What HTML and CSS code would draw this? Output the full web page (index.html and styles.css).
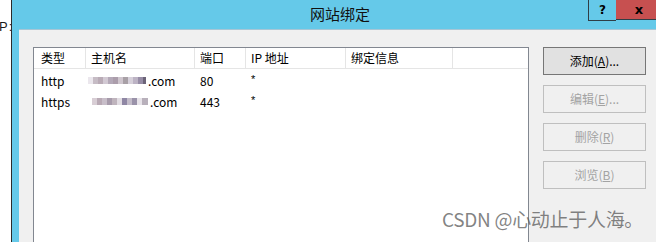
FILE: index.html
```html
<!DOCTYPE html>
<html lang="zh-CN">
<head>
<meta charset="utf-8">
<title>网站绑定</title>
<link rel="stylesheet" href="styles.css">
</head>
<body>
<div class="edge"><span class="edge-text">P<span class="colon">:</span></span></div>
<div class="window">
  <div class="titlebar">
    <div class="title">网站绑定</div>
    <div class="controls">
      <div class="ctl help">?</div>
      <div class="ctl close">x</div>
    </div>
  </div>
  <div class="client">
    <div class="list">
      <div class="grid header">
        <div class="hcell first">类型</div>
        <div class="hcell">主机名</div>
        <div class="hcell">端口</div>
        <div class="hcell">IP 地址</div>
        <div class="hcell">绑定信息</div>
      </div>
      <div class="grid row">
        <div class="cell first">http</div>
        <div class="cell"><span class="mosaic m1"></span>.com</div>
        <div class="cell">80</div>
        <div class="cell star">*</div>
        <div class="cell"></div>
      </div>
      <div class="grid row">
        <div class="cell first">https</div>
        <div class="cell"><span class="mosaic m2"></span>.com</div>
        <div class="cell">443</div>
        <div class="cell star">*</div>
        <div class="cell"></div>
      </div>
    </div>
    <div class="buttons">
      <div class="btn">添加(<u>A</u>)...</div>
      <div class="btn disabled">编辑(<u>E</u>)...</div>
      <div class="btn disabled">删除(<u>R</u>)</div>
      <div class="btn disabled">浏览(<u>B</u>)</div>
    </div>
  </div>
</div>
<div class="watermark">CSDN @心动止于人海。</div>
</body>
</html>
```

FILE: styles.css
```css
html, body {
  margin: 0;
  padding: 0;
}
body {
  width: 656px;
  height: 242px;
  overflow: hidden;
  display: flex;
  background: #ffffff;
  font-family: "Noto Sans CJK SC", "Noto Sans", sans-serif;
  font-size: 12px;
  color: #000;
  position: relative;
}
.edge {
  width: 11px;
  flex: none;
  background: #fff;
  white-space: nowrap;
}
.edge-text {
  display: block;
  margin-top: 19px;
  margin-left: -1px;
  font-family: "Liberation Sans", sans-serif;
  font-size: 13px;
  line-height: 16px;
  color: #1a1a1a;
}
.colon {
  margin-left: 1px;
}
.window {
  flex: 1;
  min-width: 0;
  display: flex;
  flex-direction: column;
  background: #65c9e9;
  border-left: 1px solid #2b2b2b;
  padding-left: 7px;
}
.titlebar {
  height: 29px;
  flex: none;
  display: flex;
  align-items: flex-start;
}
.title {
  margin-left: 291px;
  font-size: 15px;
  line-height: 28px;
  color: #111;
}
.controls {
  margin-left: auto;
  display: flex;
}
.ctl {
  height: 20px;
  border-bottom: 1px solid #2f3e46;
  font-family: "DejaVu Sans", sans-serif;
  font-weight: bold;
  font-size: 12px;
  line-height: 20px;
  text-align: center;
  color: #000;
}
.help {
  width: 27px;
  border-left: 1px solid #2f3e46;
  background: #65c9e9;
}
.close {
  width: 40px;
  background: #c75050;
  font-size: 13px;
  padding-left: 6px;
  box-sizing: border-box;
}
.client {
  flex: 1;
  min-height: 0;
  background: #f0f0f0;
  border-top: 1px solid #a7c6d6;
  display: flex;
  align-items: flex-start;
  gap: 14px;
  padding: 17px 0 0 14px;
}
.list {
  width: 494px;
  height: 194px;
  flex: none;
  border: 1px solid #828790;
  border-bottom: none;
  background: #fff;
}
.grid {
  display: grid;
  grid-template-columns: 52px 109px 51px 100px 107px;
}
.header {
  height: 20px;
  border-bottom: 1px solid #e5e5e5;
}
.hcell {
  border-right: 1px solid #e5e5e5;
  line-height: 20px;
  padding-left: 5px;
  white-space: nowrap;
  overflow: hidden;
}
.first {
  padding-left: 7px;
}
.row {
  height: 21px;
}
.header + .row {
  margin-top: 1px;
}
.cell {
  line-height: 21px;
  padding-left: 5px;
  white-space: nowrap;
  display: flex;
  align-items: center;
}
.cell.first {
  padding-left: 7px;
}
.star {
  align-items: flex-start;
  line-height: 18px;
  font-family: "Liberation Sans", sans-serif;
  font-size: 11px;
}
.mosaic {
  display: inline-block;
  height: 7px;
  filter: blur(0.6px);
}
.m1 {
  width: 58px;
  margin-left: -3px;
  margin-right: 2px;
  background: linear-gradient(90deg,
    #ebe7ed 0 5px, #c6bcc5 5px 10px, #b9abb6 10px 15px, #d2c9d3 15px 20px,
    #b4a9b8 20px 25px, #ab9dab 25px 30px, #cfc6ce 30px 35px, #a8a0a6 35px 40px,
    #d6d0da 40px 45px, #bcb3c4 45px 50px, #978da6 50px 55px, #6c6478 55px 58px);
}
.m2 {
  width: 56px;
  margin-left: 1px;
  margin-right: 2px;
  background: linear-gradient(90deg,
    #d8ced5 0 5px, #b9aab5 5px 10px, #c8bec9 10px 15px, #a79bab 15px 20px,
    #bfb4bd 20px 25px, #e2dde3 25px 30px, #8f87a4 30px 35px, #c3bcc9 35px 40px,
    #9a92a9 40px 45px, #e7e3e9 45px 50px, #b8b0bb 50px 56px);
}
.buttons {
  width: 103px;
  flex: none;
  display: flex;
  flex-direction: column;
  gap: 10px;
}
.btn {
  height: 26px;
  border: 1px solid #767676;
  background: #e1e1e1;
  text-align: center;
  line-height: 26px;
  color: #000;
  white-space: nowrap;
}
.btn u {
  text-underline-offset: 1px;
}
.btn.disabled {
  background: #f0f0f0;
  border-color: #bfbfbf;
  color: #a3a3a3;
}
.watermark {
  position: absolute;
  left: 442px;
  top: 206px;
  font-family: "Noto Sans CJK SC", sans-serif;
  font-size: 19px;
  line-height: 26px;
  color: rgba(90, 90, 90, 0.75);
  letter-spacing: -0.3px;
  white-space: nowrap;
}
```
